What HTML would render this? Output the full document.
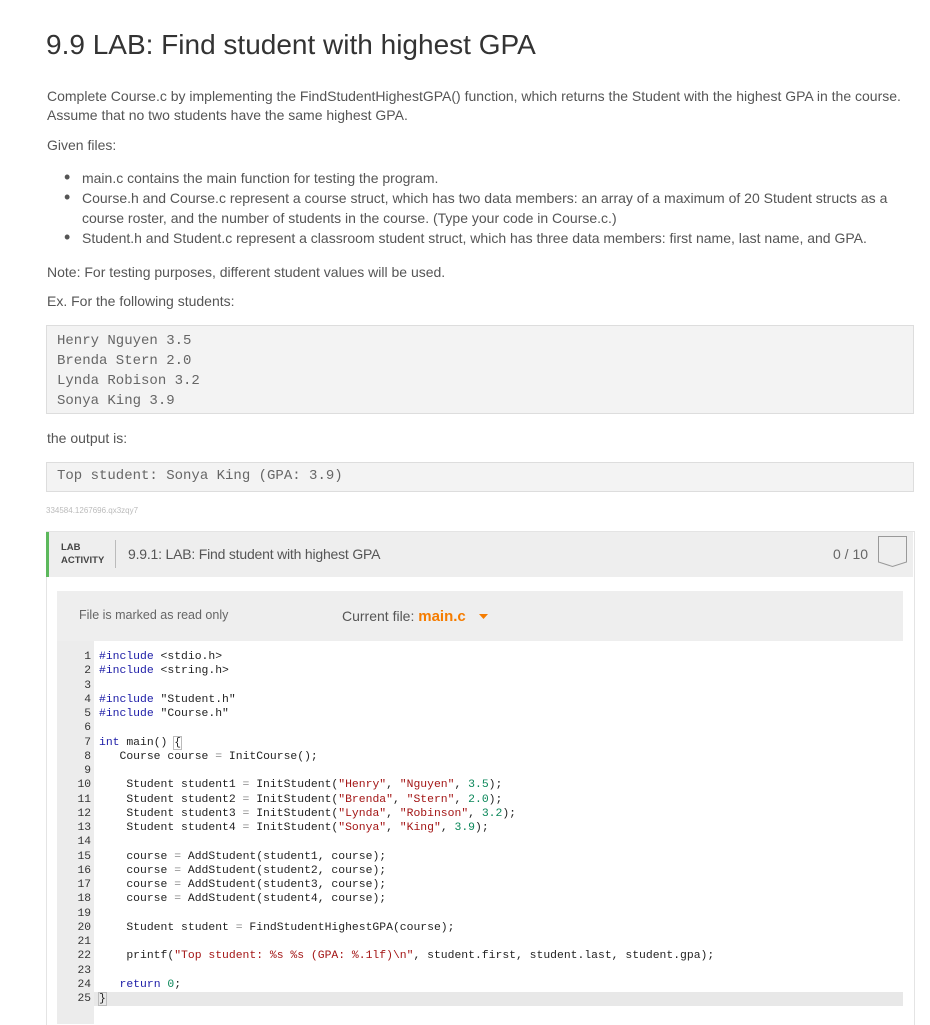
<!DOCTYPE html>
<html><head><meta charset="utf-8">
<style>
body{margin:0;width:930px;height:1024px;overflow:hidden;background:#fff;font-family:"Liberation Sans",sans-serif;color:#555;position:relative}
.a{position:absolute;white-space:nowrap}
.p{font-size:14px;line-height:18px;letter-spacing:0;color:#555}
pre{margin:0;font-family:"Liberation Mono",monospace}
pre.a{white-space:pre}
.box{position:absolute;left:46px;width:866px;background:#f3f3f3;border:1px solid #ddd}
.code{position:absolute;left:99px;top:650px;font-family:"Liberation Mono",monospace;font-size:11.4px;line-height:14.25px;color:#222;white-space:pre}
.ln{position:absolute;left:57px;top:650px;width:34px;text-align:right;font-family:"Liberation Mono",monospace;font-size:11.3px;line-height:14.25px;color:#333;white-space:pre}
.k{color:#1a1aa6}.s{color:#a31515}.n{color:#098658}.o{color:#888}
.b{font-size:18px;line-height:0}
</style></head><body>
<div class="a" style="left:46px;top:29px;font-size:28px;color:#333">9.9 LAB: Find student with highest GPA</div>
<div class="a p" style="left:47px;top:87px">Complete Course.c by implementing the FindStudentHighestGPA() function, which returns the Student with the highest GPA in the course.</div>
<div class="a p" style="left:47px;top:106px">Assume that no two students have the same highest GPA.</div>
<div class="a p" style="left:47px;top:136px">Given files:</div>
<div class="a p" style="left:64px;top:169px"><span class="b">•</span>&nbsp;&nbsp;&nbsp;main.c contains the main function for testing the program.</div>
<div class="a p" style="left:64px;top:189px"><span class="b">•</span>&nbsp;&nbsp;&nbsp;Course.h and Course.c represent a course struct, which has two data members: an array of a maximum of 20 Student structs as a</div>
<div class="a p" style="left:82px;top:209px">course roster, and the number of students in the course. (Type your code in Course.c.)</div>
<div class="a p" style="left:64px;top:229px"><span class="b">•</span>&nbsp;&nbsp;&nbsp;Student.h and Student.c represent a classroom student struct, which has three data members: first name, last name, and GPA.</div>
<div class="a p" style="left:47px;top:263px">Note: For testing purposes, different student values will be used.</div>
<div class="a p" style="left:47px;top:292px">Ex. For the following students:</div>
<div class="box" style="top:325px;height:87px"></div>
<pre class="a" style="left:57px;top:331px;font-size:14px;line-height:20px;color:#666">Henry Nguyen 3.5
Brenda Stern 2.0
Lynda Robison 3.2
Sonya King 3.9</pre>
<div class="a p" style="left:47px;top:429px">the output is:</div>
<div class="box" style="top:462px;height:28px"></div>
<pre class="a" style="left:57px;top:468px;font-size:14px;line-height:16px;color:#666">Top student: Sonya King (GPA: 3.9)</pre>
<div class="a" style="left:46px;top:506px;font-size:8px;color:#bbb">334584.1267696.qx3zqy7</div>
<div style="position:absolute;left:46px;top:531px;width:867px;height:493px;border:1px solid #e4e4e4;border-bottom:none"></div>
<div style="position:absolute;left:47px;top:532px;width:866px;height:45px;background:#eee"></div>
<div style="position:absolute;left:46px;top:532px;width:3px;height:45px;background:#5cb85c"></div>
<div class="a" style="left:61px;top:541px;font-size:9.5px;font-weight:bold;color:#444;line-height:13px">LAB<br>ACTIVITY</div>
<div style="position:absolute;left:115px;top:540px;width:1px;height:28px;background:#bbb"></div>
<div class="a" style="left:128px;top:546px;font-size:14px;color:#555;letter-spacing:-0.2px">9.9.1: LAB: Find student with highest GPA</div>
<div class="a" style="left:833px;top:546px;font-size:14px;color:#666">0 / 10</div>
<svg style="position:absolute;left:876px;top:535px" width="32" height="34"><path d="M2.5 1.5H30.5V27L16.5 31.5L2.5 27Z" fill="none" stroke="#999" stroke-width="1"/></svg>
<div style="position:absolute;left:57px;top:591px;width:846px;height:433px;background:#fff"></div>
<div style="position:absolute;left:57px;top:591px;width:846px;height:50px;background:#eee"></div>
<div class="a" style="left:79px;top:608px;font-size:12.5px;color:#666">File is marked as read only</div>
<div class="a" style="left:342px;top:608px;font-size:14px;color:#555">Current file: <b style="color:#f57c00;font-size:15px">main.c</b></div>
<svg style="position:absolute;left:479px;top:614px" width="9" height="6"><path d="M0 0H9L4.5 5Z" fill="#f57c00"/></svg>
<div style="position:absolute;left:57px;top:641px;width:37px;height:383px;background:#ececec"></div>
<div style="position:absolute;left:94px;top:992px;width:809px;height:14px;background:#e8e8e8"></div>
<div class="ln">1
2
3
4
5
6
7
8
9
10
11
12
13
14
15
16
17
18
19
20
21
22
23
24
25</div>
<div class="code"><span class="k">#include</span> &lt;stdio.h&gt;
<span class="k">#include</span> &lt;string.h&gt;

<span class="k">#include</span> "Student.h"
<span class="k">#include</span> "Course.h"

<span class="k">int</span> main() <span style="outline:1px solid #bbb">{</span>
   Course course <span class="o">=</span> InitCourse();

    Student student1 <span class="o">=</span> InitStudent(<span class="s">"Henry"</span>, <span class="s">"Nguyen"</span>, <span class="n">3.5</span>);
    Student student2 <span class="o">=</span> InitStudent(<span class="s">"Brenda"</span>, <span class="s">"Stern"</span>, <span class="n">2.0</span>);
    Student student3 <span class="o">=</span> InitStudent(<span class="s">"Lynda"</span>, <span class="s">"Robinson"</span>, <span class="n">3.2</span>);
    Student student4 <span class="o">=</span> InitStudent(<span class="s">"Sonya"</span>, <span class="s">"King"</span>, <span class="n">3.9</span>);

    course <span class="o">=</span> AddStudent(student1, course);
    course <span class="o">=</span> AddStudent(student2, course);
    course <span class="o">=</span> AddStudent(student3, course);
    course <span class="o">=</span> AddStudent(student4, course);

    Student student <span class="o">=</span> FindStudentHighestGPA(course);

    printf(<span class="s">"Top student: %s %s (GPA: %.1lf)\n"</span>, student.first, student.last, student.gpa);

   <span class="k">return</span> <span class="n">0</span>;
<span style="outline:1px solid #bbb">}</span></div>
</body></html>
